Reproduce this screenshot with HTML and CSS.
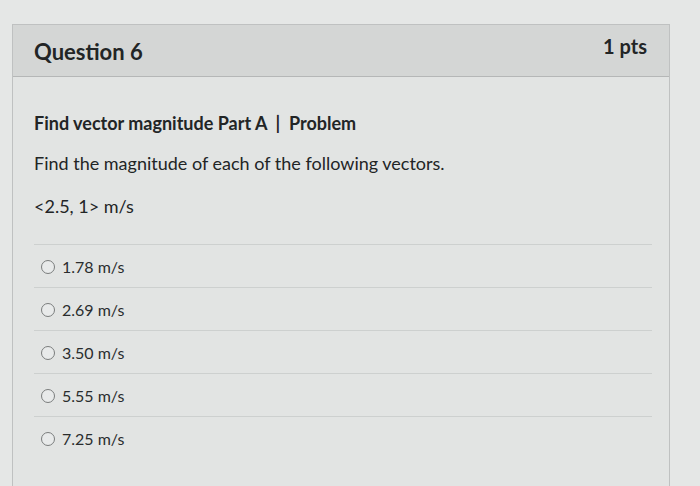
FILE: index.html
```html
<!DOCTYPE html>
<html>
<head>
<meta charset="utf-8">
<link rel="stylesheet" href="styles.css">
</head>
<body>
<div class="page">
  <div class="card">
    <div class="header">
      <h2 class="qtitle">Question 6</h2>
      <div class="pts">1 pts</div>
    </div>
    <div class="body">
      <p class="title">Find vector magnitude Part A &nbsp;|&nbsp; Problem</p>
      <p class="desc">Find the magnitude of each of the following vectors.</p>
      <p class="vec">&lt;2.5, 1&gt; m/s</p>
      <div class="answers">
        <label class="answer"><span class="radio"></span><span class="atext">1.78 m/s</span></label>
        <label class="answer"><span class="radio"></span><span class="atext">2.69 m/s</span></label>
        <label class="answer"><span class="radio"></span><span class="atext">3.50 m/s</span></label>
        <label class="answer"><span class="radio"></span><span class="atext">5.55 m/s</span></label>
        <label class="answer"><span class="radio"></span><span class="atext">7.25 m/s</span></label>
      </div>
    </div>
  </div>
</div>
</body>
</html>
```

FILE: styles.css
```css
html, body {
  margin: 0;
  padding: 0;
}
body {
  width: 700px;
  height: 486px;
  overflow: hidden;
  background: #e5e7e6;
  font-family: Lato, "Open Sans", "Liberation Sans", sans-serif;
  color: #222526;
}
.page {
  padding: 24px 30px 0 12px;
}
.card {
  border: 1px solid #bfc1c1;
  background: #e2e4e3;
  height: 470px;
  box-sizing: border-box;
}
.header {
  height: 51px;
  background: #d4d6d5;
  border-bottom: 1px solid #b5b7b7;
  display: flex;
  justify-content: space-between;
  align-items: center;
  padding: 0 22px 0 21px;
}
.qtitle {
  margin: 0;
  font-size: 22px;
  font-weight: 700;
  padding-top: 2px;
}
.pts {
  font-size: 20px;
  font-weight: 700;
  margin-bottom: 10px;
}
.body {
  padding: 34px 17px 0 21px;
}
.title {
  margin: 0;
  font-size: 18px;
  line-height: 24px;
  font-weight: 700;
}
.desc {
  margin: 16px 0 0;
  font-size: 18px;
  line-height: 24px;
}
.vec {
  margin: 19px 0 0;
  font-size: 18px;
  line-height: 24px;
}
.answers {
  margin-top: 26px;
}
.answer {
  display: flex;
  align-items: center;
  height: 43px;
  border-top: 1px solid #cdd0cf;
  padding-top: 2px;
  box-sizing: border-box;
}
.radio {
  width: 12px;
  height: 12px;
  border: 1.5px solid #7a7d7d;
  border-radius: 50%;
  margin-left: 7px;
  margin-right: 7px;
  background: #e8eaea;
}
.atext {
  font-size: 16px;
  line-height: 20px;
  color: #2a2d2e;
}
```
